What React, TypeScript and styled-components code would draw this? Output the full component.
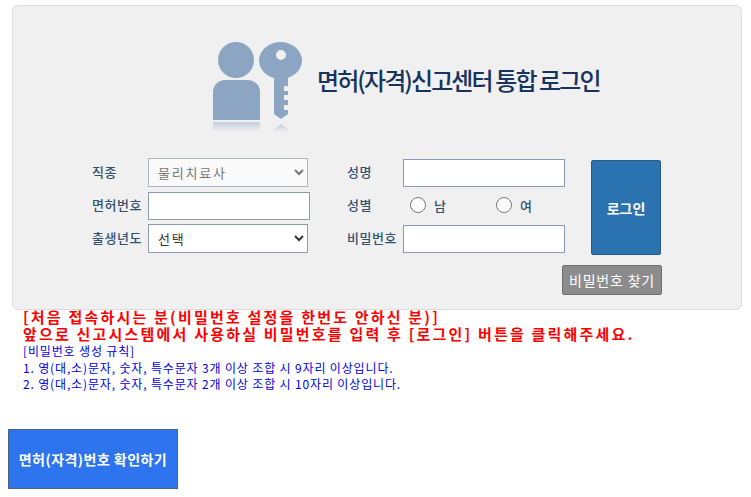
import React from 'react'
import styled, { createGlobalStyle } from 'styled-components'

const GlobalStyle = createGlobalStyle`
  html, body {
    margin: 0;
    padding: 0;
    background: #fff;
  }
  body {
    font-family: "Noto Sans CJK KR", "Noto Sans", sans-serif;
  }
`

const Page = styled.div`
  width: 751px;
  height: 497px;
  padding-top: 5px;
  box-sizing: border-box;
  overflow: hidden;
`

const Panel = styled.div`
  width: 730px;
  height: 305px;
  margin-left: 12px;
  box-sizing: border-box;
  background: #f0f0f0;
  border: 1px solid #ddd;
  border-radius: 6px;
  padding-top: 36px;
`

const Header = styled.div`
  display: flex;
  align-items: center;
  height: 90px;
  padding-left: 199px;
`

const Title = styled.h1`
  margin: 0 0 16px 15px;
  font-size: 24px;
  font-weight: 500;
  letter-spacing: -1.9px;
  color: #17335f;
  white-space: nowrap;
`

const FormArea = styled.div`
  display: flex;
  margin-top: 26px;
  padding-left: 79px;
`

const FormGrid = styled.div`
  display: grid;
  grid-template-columns: 56px 160px 39px 56px 162px;
  grid-template-rows: 29px 29px 29px;
  row-gap: 4px;
  align-items: center;
`

const Label = styled.label<{ $right?: boolean }>`
  margin-top: -3px;
  font-size: 13px;
  font-weight: 500;
  letter-spacing: 0.5px;
  color: #33506f;
  white-space: nowrap;
  grid-column: ${(p) => (p.$right ? 4 : 1)};
`

const Select = styled.select<{ $muted?: boolean }>`
  grid-column: 2;
  width: 160px;
  height: 29px;
  box-sizing: border-box;
  padding-left: 5px;
  border: 1px solid ${(p) => (p.$muted ? '#a9b5c4' : '#8a9bb3')};
  border-radius: 0;
  background: ${(p) => (p.$muted ? '#fafafa' : '#fff')};
  color: ${(p) => (p.$muted ? '#777' : '#333')};
  font-family: inherit;
  font-size: 13px;
  letter-spacing: 1.8px;
`

const TextInput = styled.input<{ $right?: boolean }>`
  grid-column: ${(p) => (p.$right ? 5 : 2)};
  width: 162px;
  height: 28px;
  box-sizing: border-box;
  border: 1px solid #8a9bb3;
  background: #fff;
  padding: 0 6px;
`

const RadioRow = styled.div`
  grid-column: 5;
  display: flex;
  align-items: center;
  padding: 0 0 1px 7px;
`

const RadioItem = styled.label`
  display: flex;
  flex: 0 0 86px;
  align-items: center;
  gap: 8px;
  font-size: 13px;
  font-weight: 500;
  color: #33506f;
`

const Radio = styled.input`
  width: 16px;
  height: 16px;
  margin: 0;
`

const ActionColumn = styled.div`
  display: flex;
  flex-direction: column;
  width: 70px;
  margin-left: 26px;
  padding-top: 2px;
`

const LoginButton = styled.button`
  width: 70px;
  height: 95px;
  padding: 0;
  background: #2b72b0;
  border: 1px solid #2a5a8a;
  border-radius: 2px;
  color: #fff;
  font-family: inherit;
  font-size: 14px;
  font-weight: 700;
`

const FindButton = styled.button`
  flex: none;
  width: 100px;
  height: 30px;
  margin: 10px 0 0 -29px;
  padding: 0;
  background: #8c8c8c;
  border: 1px solid #6f6f6f;
  border-radius: 2px;
  color: #fff;
  font-family: inherit;
  font-size: 14px;
  letter-spacing: 0.8px;
  white-space: nowrap;
`

const Notice = styled.div`
  margin: -2px 0 0 23px;
`

const NoticeStrong = styled.div`
  font-size: 15px;
  line-height: 17px;
  font-weight: 700;
  color: #ff0000;
  letter-spacing: 2.2px;
  white-space: nowrap;
`

const NoticeRules = styled.div`
  margin-top: 1px;
`

const NoticeRule = styled.div`
  font-size: 12px;
  line-height: 16.5px;
  color: #0000e6;
  letter-spacing: 0.85px;
  white-space: nowrap;
`

const CheckButton = styled.button`
  display: block;
  width: 170px;
  height: 60px;
  margin: 36px 0 0 8px;
  padding: 0;
  background: #2d74ee;
  border: 1px solid #4a6484;
  color: #fff;
  font-family: inherit;
  font-size: 14px;
  font-weight: 700;
  letter-spacing: 0.45px;
  white-space: nowrap;
`

const LoginIcon = () => (
  <svg width="90" height="90" viewBox="0 0 90 90">
    <defs>
      <linearGradient id="fade" x1="0" y1="0" x2="0" y2="1">
        <stop offset="0" stopColor="#8ba5c2" stopOpacity="0.45" />
        <stop offset="1" stopColor="#8ba5c2" stopOpacity="0" />
      </linearGradient>
    </defs>
    <g fill="#8ba5c2">
      <circle cx="24" cy="18" r="18" />
      <path d="M1 78V50a12 12 0 0 1 12-12h23a12 12 0 0 1 12 12v28z" />
      <path
        fillRule="evenodd"
        d="M47 18.500a21.500 18.500 0 1 0 43 0a21.500 18.500 0 1 0 -43 0zM64 13a5 5 0 1 0 10 0a5 5 0 1 0 -10 0z"
      />
      <path d="M62 34h14v10h-4v5h4v4h-4v5h4v5h-4v5h4v4l-7 5-7-5z" />
    </g>
    <path d="M1 80h47v10H1z" fill="url(#fade)" />
    <path d="M62 87l7-5 7 5v3H62z" fill="url(#fade)" />
  </svg>
)

export default function App() {
  return (
    <>
      <GlobalStyle />
      <Page>
        <Panel>
          <Header>
            <LoginIcon />
            <Title>면허(자격)신고센터 통합 로그인</Title>
          </Header>
          <FormArea>
            <FormGrid>
              <Label>직종</Label>
              <Select $muted defaultValue="pt">
                <option value="pt">물리치료사</option>
              </Select>
              <Label $right>성명</Label>
              <TextInput $right />
              <Label>면허번호</Label>
              <TextInput />
              <Label $right>성별</Label>
              <RadioRow>
                <RadioItem>
                  <Radio type="radio" name="gender" />남
                </RadioItem>
                <RadioItem>
                  <Radio type="radio" name="gender" />여
                </RadioItem>
              </RadioRow>
              <Label>출생년도</Label>
              <Select defaultValue="">
                <option value="">선택</option>
              </Select>
              <Label $right>비밀번호</Label>
              <TextInput $right type="password" />
            </FormGrid>
            <ActionColumn>
              <LoginButton>로그인</LoginButton>
              <FindButton>비밀번호 찾기</FindButton>
            </ActionColumn>
          </FormArea>
        </Panel>
        <Notice>
          <NoticeStrong>[처음 접속하시는 분(비밀번호 설정을 한번도 안하신 분)]</NoticeStrong>
          <NoticeStrong>앞으로 신고시스템에서 사용하실 비밀번호를 입력 후 [로그인] 버튼을 클릭해주세요.</NoticeStrong>
          <NoticeRules>
            <NoticeRule>[비밀번호 생성 규칙]</NoticeRule>
            <NoticeRule>1. 영(대,소)문자, 숫자, 특수문자 3개 이상 조합 시 9자리 이상입니다.</NoticeRule>
            <NoticeRule>2. 영(대,소)문자, 숫자, 특수문자 2개 이상 조합 시 10자리 이상입니다.</NoticeRule>
          </NoticeRules>
        </Notice>
        <CheckButton>면허(자격)번호 확인하기</CheckButton>
      </Page>
    </>
  )
}
